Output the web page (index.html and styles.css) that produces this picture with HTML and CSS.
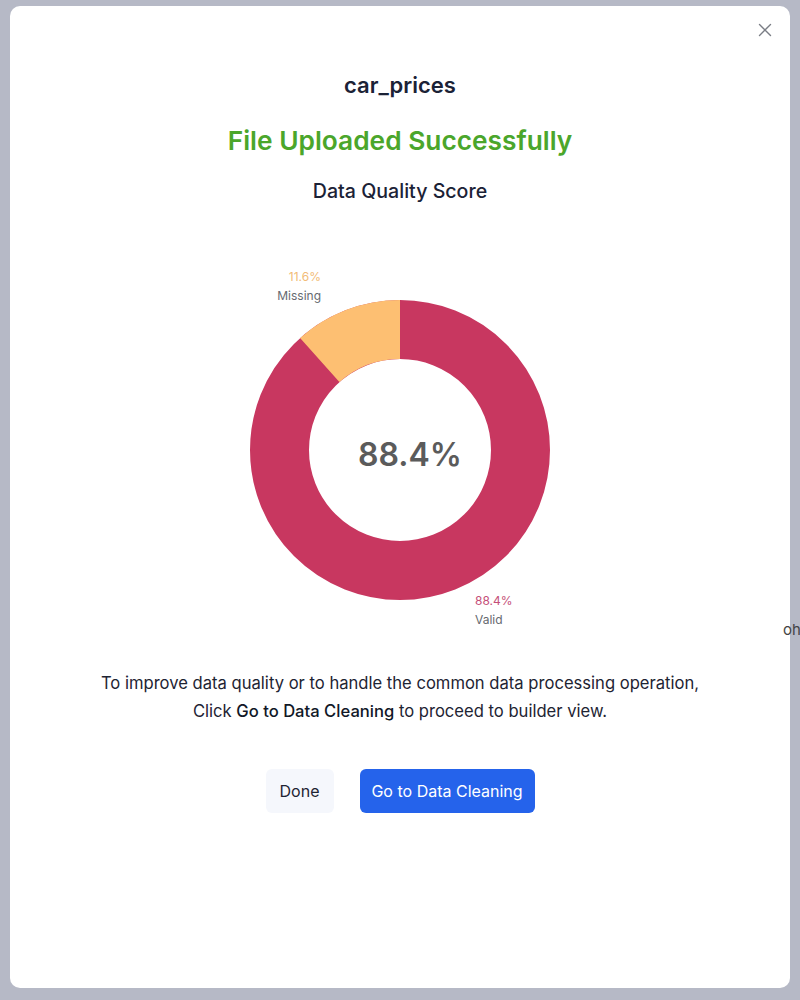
FILE: index.html
```html
<!DOCTYPE html>
<html>
<head>
<meta charset="utf-8">
<link rel="stylesheet" href="styles.css">
</head>
<body>
<div class="overlay">
  <div class="modal">
    <button class="close" aria-label="Close">
      <svg width="14" height="14" viewBox="0 0 14 14"><path d="M1.5 1.5L12.5 12.5M12.5 1.5L1.5 12.5" stroke="#7a7d85" stroke-width="1.4" stroke-linecap="round"/></svg>
    </button>
    <h1 class="title">car_prices</h1>
    <h2 class="success">File Uploaded Successfully</h2>
    <h3 class="subtitle">Data Quality Score</h3>
    <div class="chart">
      <svg class="donut" width="300" height="300" viewBox="0 0 300 300">
        <circle cx="150" cy="150" r="120.5" fill="none" stroke="#c83760" stroke-width="59"/>
        <path d="M150 0 A150 150 0 0 0 50.08 38.1 L89.39 82.12 A91 91 0 0 1 150 59 Z" fill="#fdbf72"/>
      </svg>
      <div class="center-value">88.4%</div>
      <div class="label label-missing"><span class="pct">11.6%</span><span class="name">Missing</span></div>
      <div class="label label-valid"><span class="pct">88.4%</span><span class="name">Valid</span></div>
    </div>
    <p class="info">To improve data quality or to handle the common data processing operation,<br>Click <strong>Go to Data Cleaning</strong> to proceed to builder view.</p>
    <div class="actions">
      <button class="btn btn-done">Done</button>
      <button class="btn btn-primary">Go to Data Cleaning</button>
    </div>
  </div>
  <span class="behind">oh</span>
</div>
</body>
</html>
```
FILE: styles.css
```css
* { box-sizing: border-box; }
html, body { margin: 0; padding: 0; }
body {
  width: 800px;
  height: 1000px;
  background: #b6b9c6;
  font-family: Inter, "Noto Sans", sans-serif;
  overflow: hidden;
}
.overlay {
  position: relative;
  width: 800px;
  height: 1000px;
  padding: 6px 10px 12px 10px;
}
.modal {
  position: relative;
  background: #ffffff;
  border-radius: 10px;
  height: 982px;
  padding-top: 64px;
  display: flex;
  flex-direction: column;
  align-items: center;
}
.close {
  position: absolute;
  top: 12px;
  right: 13px;
  width: 24px;
  height: 24px;
  border: none;
  background: transparent;
  padding: 5px;
  display: flex;
  align-items: center;
  justify-content: center;
}
.title {
  margin: 0;
  font-size: 22px;
  line-height: 30px;
  font-weight: 600;
  color: #1b2236;
}
.success {
  margin: 23px 0 0;
  font-size: 26.3px;
  line-height: 36px;
  font-weight: 600;
  color: #4ba62b;
}
.subtitle {
  margin: 18px 0 0;
  font-size: 19.6px;
  line-height: 28px;
  font-weight: 500;
  color: #1b2236;
}
.chart {
  position: relative;
  margin-top: 60px;
  width: 400px;
  height: 370px;
}
.donut {
  position: absolute;
  left: 50px;
  top: 35px;
}
.center-value {
  position: absolute;
  left: 60px;
  width: 300px;
  top: 168px;
  text-align: center;
  font-size: 32px;
  line-height: 44px;
  font-weight: 600;
  color: #5b5b5b;
}
.label {
  position: absolute;
  display: flex;
  flex-direction: column;
  font-size: 12px;
  line-height: 19px;
}
.label .name { color: #666a70; }
.label-missing {
  right: 279px;
  top: 2px;
  align-items: flex-end;
}
.label-missing .pct { color: #f2bb76; }
.label-valid {
  left: 275px;
  top: 326px;
  align-items: flex-start;
}
.label-valid .pct { color: #c54f79; }
.info {
  margin: 34px 0 0;
  text-align: center;
  font-size: 16.6px;
  line-height: 28px;
  color: #1e2433;
}
.info strong { font-weight: 500; color: #111827; }
.actions {
  margin-top: 44px;
  display: flex;
  gap: 26px;
}
.btn {
  height: 44px;
  border: none;
  border-radius: 6px;
  font-family: inherit;
  font-size: 16px;
  padding: 0 14px;
}
.btn-done {
  background: #f5f7fc;
  color: #1e2433;
  width: 68px;
  padding: 0;
}
.btn-primary {
  background: #2563eb;
  color: #ffffff;
  width: 175px;
  padding: 0;
}
.behind {
  position: absolute;
  left: 783px;
  top: 620px;
  font-size: 15px;
  color: #444;
  font-family: Inter, sans-serif;
}
```
